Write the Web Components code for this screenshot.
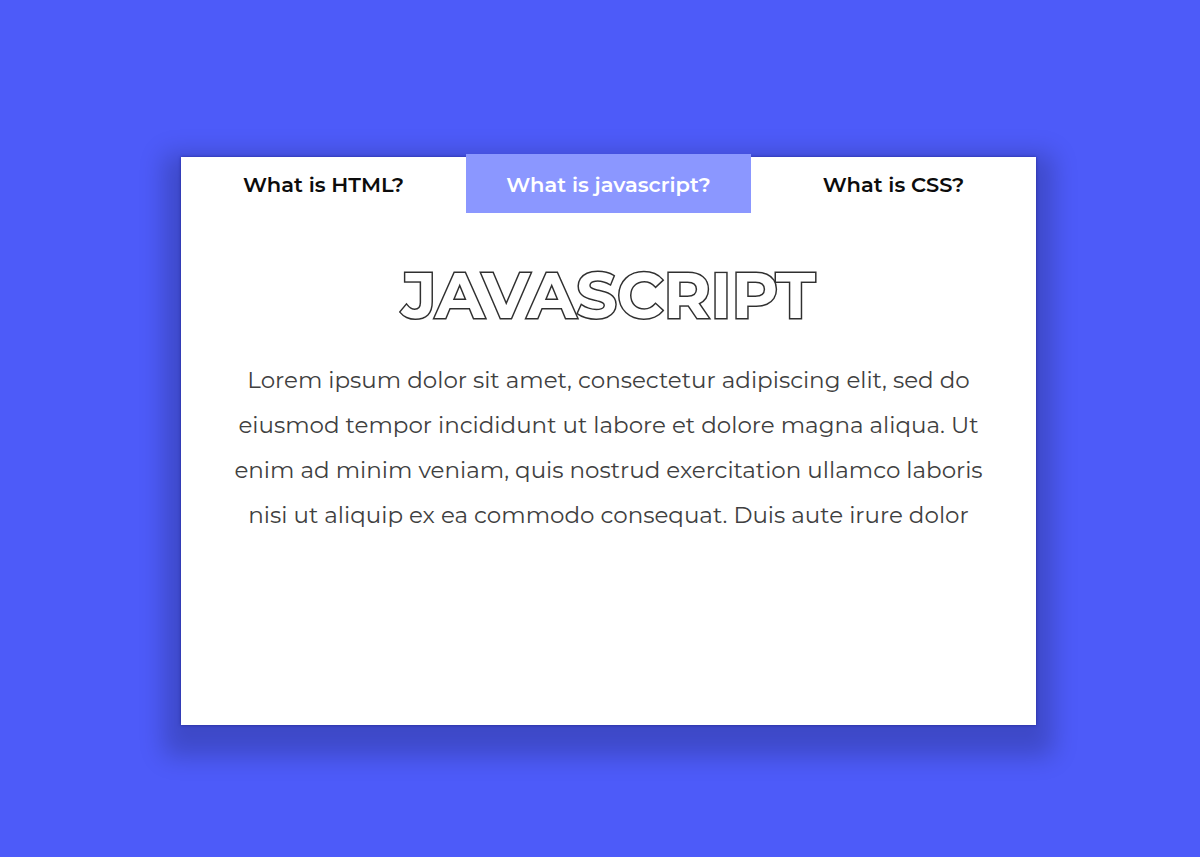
<!DOCTYPE html>
<html lang="en">
<head>
<meta charset="utf-8">
<meta name="viewport" content="width=device-width, initial-scale=1">
<title>What is javascript?</title>
<style>
  body { margin: 0; background: #4d5bf9; font-family: Montserrat, Inter, sans-serif; }
</style>
</head>
<body>
<tab-page>
  <tab-card>
    <tab-item slot="tab">What is HTML?</tab-item>
    <tab-item slot="tab" active>What is javascript?</tab-item>
    <tab-item slot="tab">What is CSS?</tab-item>
    <tab-panel>
      <span slot="title">JAVASCRIPT</span>
      Lorem ipsum dolor sit amet, consectetur adipiscing elit, sed do<br>
      eiusmod tempor incididunt ut labore et dolore magna aliqua. Ut<br>
      enim ad minim veniam, quis nostrud exercitation ullamco laboris<br>
      nisi ut aliquip ex ea commodo consequat. Duis aute irure dolor
    </tab-panel>
  </tab-card>
</tab-page>
<script>
class TabPage extends HTMLElement {
  constructor() {
    super();
    this.attachShadow({ mode: 'open' }).innerHTML = `
      <style>
        :host { display: grid; box-sizing: border-box; min-height: 100vh; padding: 157px 164px 132px 181px; }
      </style>
      <slot></slot>`;
  }
}
class TabCard extends HTMLElement {
  constructor() {
    super();
    this.attachShadow({ mode: 'open' }).innerHTML = `
      <style>
        :host { display: block; background: #fff; box-shadow: 0 14px 24px 17px rgba(0, 0, 0, .2), 0 0 3px rgba(20, 20, 140, .6); }
        nav { display: grid; grid-template-columns: repeat(3, 1fr); }
      </style>
      <nav><slot name="tab"></slot></nav>
      <slot></slot>`;
  }
}
class TabItem extends HTMLElement {
  constructor() {
    super();
    this.attachShadow({ mode: 'open' }).innerHTML = `
      <style>
        :host { display: block; }
        button {
          display: block; width: 100%; height: 56px; padding: 0; border: 0;
          background: none; color: #0c0c0c; font: 600 21px/56px Montserrat, Inter, sans-serif;
          text-align: center; cursor: pointer;
        }
        :host([active]) button { background: #8b97ff; color: #fff; box-shadow: 0 -3px 0 #8b97ff; }
      </style>
      <button type="button"><slot></slot></button>`;
  }
}
class TabPanel extends HTMLElement {
  constructor() {
    super();
    this.attachShadow({ mode: 'open' }).innerHTML = `
      <style>
        :host { display: block; padding: 42px 40px; text-align: center; }
        h1 {
          margin: 0 0 23px; font-size: 64px; line-height: 80px; font-weight: 700;
          color: #fff; -webkit-text-stroke: 3px #303030; paint-order: stroke fill; stroke-linejoin: round;
        }
        p { margin: 0; font-size: 23px; line-height: 45px; color: #404040; }
      </style>
      <h1><slot name="title"></slot></h1>
      <p><slot></slot></p>`;
  }
}
customElements.define('tab-page', TabPage);
customElements.define('tab-card', TabCard);
customElements.define('tab-item', TabItem);
customElements.define('tab-panel', TabPanel);
</script>
</body>
</html>
